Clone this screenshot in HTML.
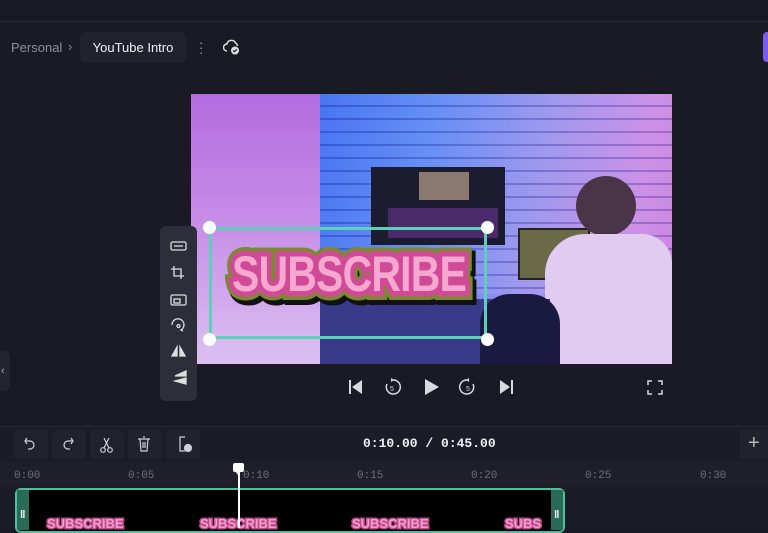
<!DOCTYPE html>
<html><head><meta charset="utf-8"><style>
*{margin:0;padding:0;box-sizing:border-box}
body{width:768px;height:528px;overflow:hidden;background:#1a1a24;font-family:"Liberation Sans",sans-serif;position:relative;color:#e8e8ee}
.abs{position:absolute}
.sub{position:absolute;left:199px;top:246px;width:300px;text-align:center;font:bold 50px/56px "Liberation Sans",sans-serif;transform:scaleX(0.82);letter-spacing:-1px;paint-order:stroke fill;white-space:nowrap}
.ts{font:bold 13px "Liberation Sans",sans-serif;color:#f3a0c8;-webkit-text-stroke:3px #c04890;paint-order:stroke fill}
</style></head><body>
<div class="abs" style="left:0;top:0;width:768px;height:21px;background:#191923"></div>
<div class="abs" style="left:0;top:21px;width:768px;height:1px;background:#2c2c38"></div>
<div class="abs" style="left:11px;top:40px;font-size:13px;color:#8e8e9c">Personal</div>
<div class="abs" style="left:68px;top:39px;font-size:13px;color:#8e8e9c">›</div>
<div class="abs" style="left:80px;top:32px;width:106px;height:31px;background:#22222c;border-radius:6px;font-size:13px;color:#f0f0f4;line-height:31px;text-align:center">YouTube Intro</div>
<div class="abs" style="left:199px;top:40px;font-size:13px;color:#aaa;line-height:5px">·<br>·<br>·</div>
<svg class="abs" style="left:223px;top:38px" width="18" height="18" viewBox="0 0 18 18"><path d="M4 13a3.5 3.5 0 0 1 0-7a4.5 4.5 0 0 1 8.5-1a3.5 3.5 0 0 1 2 3" fill="none" stroke="#ddd" stroke-width="1.5"/><circle cx="12" cy="12.5" r="4" fill="#ddd"/><path d="M10.2 12.5l1.3 1.2l2.3-2.4" stroke="#1a1a24" stroke-width="1.2" fill="none"/></svg>
<div class="abs" style="left:763px;top:32px;width:8px;height:30px;background:#7b5cf0;border-radius:4px"></div>

<!-- video -->
<div class="abs" style="left:191px;top:94px;width:129px;height:270px;background:linear-gradient(180deg,#b46adf 0%,#c890e8 50%,#dcc0f0 100%)"></div>
<div class="abs" style="left:320px;top:94px;width:352px;height:270px;background:linear-gradient(100deg,#3a6af0 0%,#5a86f4 30%,#9a90ec 60%,#c888e4 85%,#c878dc 100%);overflow:hidden">
 <div class="abs" style="left:0;top:0;width:352px;height:200px;background:repeating-linear-gradient(180deg,rgba(255,255,255,.08) 0 11px,rgba(40,40,140,.28) 11px 13px)"></div>
 <div class="abs" style="left:51px;top:73px;width:134px;height:78px;background:#1c1c30"></div>
 <div class="abs" style="left:99px;top:78px;width:50px;height:28px;background:#8a7a70"></div>
 <div class="abs" style="left:68px;top:114px;width:110px;height:30px;background:#4a2a6a"></div>
 <div class="abs" style="left:198px;top:134px;width:72px;height:52px;background:#6a6a48;border:2px solid #222"></div>
 <div class="abs" style="left:256px;top:82px;width:60px;height:60px;background:#4a3448;border-radius:50%"></div>
 <div class="abs" style="left:225px;top:140px;width:127px;height:130px;background:#e0ccf0;border-radius:40px 30px 0 0"></div>
 <div class="abs" style="left:0;top:205px;width:230px;height:65px;background:#3a3a8a"></div>
 <div class="abs" style="left:160px;top:200px;width:80px;height:70px;background:#1a1a40;border-radius:30px 30px 0 0"></div>
</div>
<!-- subscribe -->
<div class="sub" style="color:#111;-webkit-text-stroke:20px #111;top:250px;left:202px">SUBSCRIBE</div>
<div class="sub" style="color:#7a8a30;-webkit-text-stroke:18px #7a8a30">SUBSCRIBE</div>
<div class="sub" style="color:#d04a98;-webkit-text-stroke:11px #d04a98">SUBSCRIBE</div>
<div class="sub" style="color:#f6a8d0">SUBSCRIBE</div>
<div class="abs" style="left:209px;top:227px;width:278px;height:112px;border:3px solid #5dd0b8"></div>
<div class="abs" style="left:203px;top:221px;width:13px;height:13px;border-radius:50%;background:#fff"></div>
<div class="abs" style="left:481px;top:221px;width:13px;height:13px;border-radius:50%;background:#fff"></div>
<div class="abs" style="left:203px;top:333px;width:13px;height:13px;border-radius:50%;background:#fff"></div>
<div class="abs" style="left:481px;top:333px;width:13px;height:13px;border-radius:50%;background:#fff"></div>

<!-- tool palette -->
<div class="abs" style="left:160px;top:226px;width:37px;height:175px;background:#2e2e3a;border-radius:6px"></div>
<svg class="abs" style="left:160px;top:226px" width="37" height="175" viewBox="0 0 37 175" fill="none" stroke="#ddd" stroke-width="1.3">
<rect x="11" y="16" width="15" height="8" rx="1.5"/><path d="M14 20h9"/>
<path d="M14 40v10h10M11 43h10v10"/>
<rect x="11" y="69" width="15" height="10" rx="1.5"/><rect x="14" y="73" width="6" height="4"/>
<path d="M12 99a6 6 0 1 1 9 5l2 1"/><circle cx="18.5" cy="100" r="1.5"/>
<path d="M17 121l-5 9h5zM20 121l5 9h-5z" fill="#ddd"/>
<path d="M26 145l-11 5h11zM26 152l-11 3l11 3z" fill="#ddd"/>
</svg>
<div class="abs" style="left:0;top:351px;width:10px;height:40px;background:#24242e;border-radius:0 6px 6px 0;font-size:11px;color:#aaa;line-height:40px;padding-left:1px">‹</div>

<!-- playback -->
<svg class="abs" style="left:345px;top:376px" width="330" height="22" viewBox="0 0 330 22" fill="#d8d8de" stroke="none">
<rect x="4" y="4" width="2" height="14"/><path d="M17 4v14l-10-7z"/>
<path d="M48 4a7 7 0 1 1-6 4" fill="none" stroke="#d8d8de" stroke-width="1.5"/><path d="M46 2l3 2l-3 2z"/><text x="45" y="15" font-size="7" font-family="Liberation Sans">5</text>
<path d="M80 3v16l14-8z"/>
<path d="M122 4a7 7 0 1 0 6 4" fill="none" stroke="#d8d8de" stroke-width="1.5"/><path d="M124 2l-3 2l3 2z"/><text x="121" y="15" font-size="7" font-family="Liberation Sans">5</text>
<path d="M155 4v14l10-7z"/><rect x="166" y="4" width="2" height="14"/>
<path d="M303 9V5h4M313 5h4v4M317 14v4h-4M307 18h-4v-4" fill="none" stroke="#d8d8de" stroke-width="1.5"/>
</svg>

<!-- timeline -->
<div class="abs" style="left:0;top:426px;width:768px;height:102px;background:#1c1c26"></div>
<div class="abs" style="left:0;top:426px;width:768px;height:1px;background:#2a2a36"></div>
<div class="abs" style="left:14px;top:430px;width:34px;height:29px;background:#22222c;border-radius:4px"></div>
<div class="abs" style="left:52px;top:430px;width:34px;height:29px;background:#22222c;border-radius:4px"></div>
<div class="abs" style="left:90px;top:430px;width:34px;height:29px;background:#22222c;border-radius:4px"></div>
<div class="abs" style="left:128px;top:430px;width:34px;height:29px;background:#22222c;border-radius:4px"></div>
<div class="abs" style="left:166px;top:430px;width:34px;height:29px;background:#22222c;border-radius:4px"></div>
<svg class="abs" style="left:14px;top:430px" width="190" height="29" viewBox="0 0 190 29" fill="none" stroke="#cfcfd6" stroke-width="1.2">
<path d="M13 8l-2 3l2 3M11 11h5a4 4 0 0 1 0 8h-2"/>
<path d="M57 8l2 3l-2 3M59 11h-5a4 4 0 0 0 0 8h2"/>
<circle cx="89" cy="20" r="2.3"/><circle cx="96" cy="20" r="2.3"/><path d="M90 18l5-10M95 18l-5-10"/>
<path d="M124 9h12M126 9l1 12h6l1-12M129 7h2M129 12v6M131 12v6"/>
<path d="M171 7h-5v14h5"/><circle cx="174" cy="18" r="3.5" fill="#cfcfd6"/>
</svg>
<div class="abs" style="left:363px;top:436px;font:bold 13px 'Liberation Mono',monospace;color:#f0f0f4">0:10.00 / 0:45.00</div>
<div class="abs" style="left:740px;top:430px;width:28px;height:29px;background:#22222c"></div>
<div class="abs" style="left:748px;top:432px;font-size:20px;color:#bbb">+</div>
<div class="abs" style="left:0;top:462px;width:768px;height:24px;background:#1f1f29"></div>
<div class="abs" style="left:0;top:462px;width:768px;height:24px;font:11px 'Liberation Mono',monospace;color:#6e6e7c">
<span class="abs" style="left:14px;top:8px">0:00</span><span class="abs" style="left:128px;top:8px">0:05</span><span class="abs" style="left:243px;top:8px">0:10</span><span class="abs" style="left:357px;top:8px">0:15</span><span class="abs" style="left:471px;top:8px">0:20</span><span class="abs" style="left:585px;top:8px">0:25</span><span class="abs" style="left:700px;top:8px">0:30</span>
</div>
<div class="abs" style="left:15px;top:488px;width:550px;height:45px;background:#000;border:2px solid #4dbf9c;border-radius:6px;overflow:hidden">
<div class="abs ts" style="left:30px;top:26px">SUBSCRIBE</div>
<div class="abs ts" style="left:183px;top:26px">SUBSCRIBE</div>
<div class="abs ts" style="left:335px;top:26px">SUBSCRIBE</div>
<div class="abs ts" style="left:488px;top:26px">SUBS</div>
</div>
<div class="abs" style="left:17px;top:490px;width:12px;height:40px;background:#2a6a58"></div>
<div class="abs" style="left:551px;top:490px;width:12px;height:40px;background:#2a6a58"></div>
<div class="abs" style="left:20px;top:509px;font-size:11px;color:#fff;font-weight:bold">‖</div>
<div class="abs" style="left:554px;top:509px;font-size:11px;color:#fff;font-weight:bold">‖</div>
<div class="abs" style="left:238px;top:468px;width:1.5px;height:60px;background:#fff"></div>
<div class="abs" style="left:233px;top:463px;width:11px;height:9px;background:#fff;border-radius:2px"></div>
<div class="abs" style="left:234px;top:470px;width:0;height:0;border-left:4.5px solid transparent;border-right:4.5px solid transparent;border-top:5px solid #fff"></div>
</body></html>
